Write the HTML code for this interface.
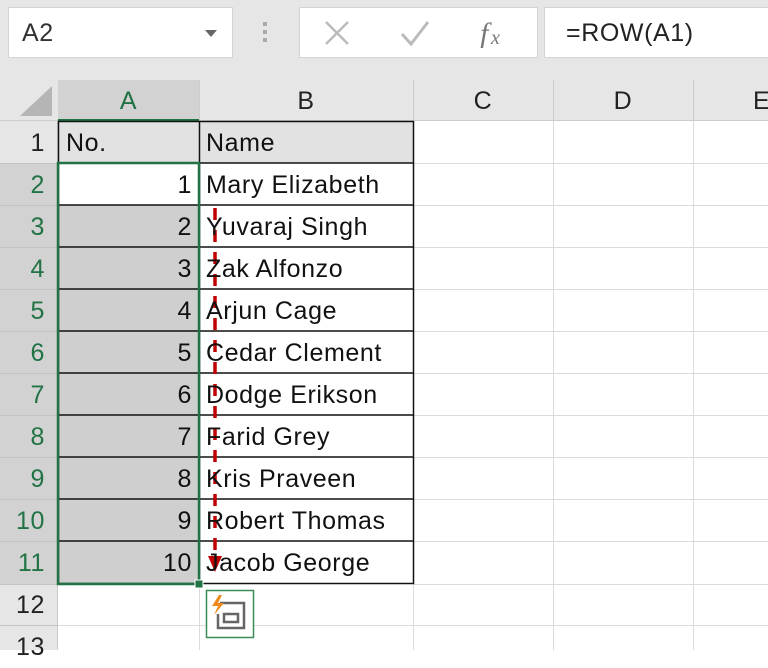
<!DOCTYPE html>
<html><head><style>
body{margin:0;width:768px;height:650px;overflow:hidden;background:#fff;font-family:"Liberation Sans",sans-serif;position:relative}
.a{position:absolute;box-sizing:border-box}
.t{font-size:25px;letter-spacing:0.6px;line-height:42px;white-space:nowrap}
</style></head><body>
<div class="a" style="left:0;top:0;width:768px;height:121px;background:#e6e6e6"></div>
<div class="a" style="left:8px;top:7px;width:225px;height:51px;background:#fff;border:1px solid #d4d4d4"></div>
<div class="a t" style="left:22px;top:12px;color:#333">A2</div>
<div class="a" style="left:205px;top:30px;width:0;height:0;border-left:6px solid transparent;border-right:6px solid transparent;border-top:7px solid #666"></div>
<div class="a" style="left:263px;top:22px;width:4px;height:4px;background:#aaa;box-shadow:0 8px 0 #aaa,0 16px 0 #aaa"></div>
<div class="a" style="left:299px;top:7px;width:239px;height:51px;background:#fff;border:1px solid #d4d4d4"></div>
<svg class="a" style="left:320px;top:18px" width="200" height="30"><path d="M6 4 L28 26 M28 4 L6 26" stroke="#bbb" stroke-width="2.5" fill="none"/><path d="M82 16 L91 26 L108 4" stroke="#bbb" stroke-width="3" fill="none"/><text x="160" y="25" font-family="Liberation Serif" font-style="italic" font-size="30" fill="#777">f</text><text x="171" y="26" font-family="Liberation Serif" font-style="italic" font-size="20" fill="#777">x</text></svg>
<div class="a" style="left:544px;top:7px;width:230px;height:51px;background:#fff;border:1px solid #d4d4d4"></div>
<div class="a t" style="left:566px;top:12px;color:#222">=ROW(A1)</div>
<div class="a" style="left:0;top:80px;width:768px;height:41px;background:#e6e6e6;border-bottom:1px solid #ccc"></div>
<div class="a" style="left:58px;top:80px;width:141px;height:41px;background:#d2d2d2;border-bottom:2px solid #217346"></div>
<svg class="a" style="left:18px;top:84px" width="36" height="34"><path d="M34 2 L34 32 L2 32Z" fill="#b5b5b5"/></svg>
<div class="a" style="left:199px;top:80px;width:1px;height:41px;background:#ccc"></div>
<div class="a" style="left:413px;top:80px;width:1px;height:41px;background:#ccc"></div>
<div class="a" style="left:553px;top:80px;width:1px;height:41px;background:#ccc"></div>
<div class="a" style="left:693px;top:80px;width:1px;height:41px;background:#ccc"></div>
<div class="a t" style="left:58px;top:80px;width:141px;text-align:center;color:#217346">A</div>
<div class="a t" style="left:199px;top:80px;width:214px;text-align:center;color:#222">B</div>
<div class="a t" style="left:413px;top:80px;width:140px;text-align:center;color:#222">C</div>
<div class="a t" style="left:553px;top:80px;width:140px;text-align:center;color:#222">D</div>
<div class="a t" style="left:753px;top:80px;color:#222">E</div>
<div class="a" style="left:0;top:121px;width:58px;height:529px;background:#e6e6e6;border-right:1px solid #ccc"></div>
<div class="a" style="left:0;top:163px;width:58px;height:421px;background:#d2d2d2"></div>
<svg class="a" style="left:0;top:0" width="768" height="650">
<g stroke="#dadada" stroke-width="1">
<line x1="413.5" y1="121" x2="413.5" y2="650"/><line x1="553.5" y1="121" x2="553.5" y2="650"/><line x1="693.5" y1="121" x2="693.5" y2="650"/>
<line x1="199.5" y1="584" x2="199.5" y2="650"/>
<line x1="58" y1="625.5" x2="768" y2="625.5"/><line x1="413" y1="584.5" x2="768" y2="584.5"/>
<line x1="413" y1="163.5" x2="768" y2="163.5"/><line x1="413" y1="205.5" x2="768" y2="205.5"/><line x1="413" y1="247.5" x2="768" y2="247.5"/><line x1="413" y1="289.5" x2="768" y2="289.5"/><line x1="413" y1="331.5" x2="768" y2="331.5"/><line x1="413" y1="373.5" x2="768" y2="373.5"/><line x1="413" y1="415.5" x2="768" y2="415.5"/><line x1="413" y1="457.5" x2="768" y2="457.5"/><line x1="413" y1="499.5" x2="768" y2="499.5"/><line x1="413" y1="541.5" x2="768" y2="541.5"/>
</g>
<g stroke="#c4c4c4"><line x1="0" y1="163.5" x2="58" y2="163.5"/><line x1="0" y1="205.5" x2="58" y2="205.5"/><line x1="0" y1="247.5" x2="58" y2="247.5"/><line x1="0" y1="289.5" x2="58" y2="289.5"/><line x1="0" y1="331.5" x2="58" y2="331.5"/><line x1="0" y1="373.5" x2="58" y2="373.5"/><line x1="0" y1="415.5" x2="58" y2="415.5"/><line x1="0" y1="457.5" x2="58" y2="457.5"/><line x1="0" y1="499.5" x2="58" y2="499.5"/><line x1="0" y1="541.5" x2="58" y2="541.5"/><line x1="0" y1="584.5" x2="58" y2="584.5"/><line x1="0" y1="625.5" x2="58" y2="625.5"/></g>
<rect x="58" y="121" width="355" height="42" fill="#e2e2e2"/>
<rect x="58" y="205" width="141" height="379" fill="#cfcfcf"/>
<g stroke="#111" stroke-width="1.5" fill="none">
<rect x="58.5" y="121.5" width="355" height="462"/>
<line x1="199.5" y1="121" x2="199.5" y2="584"/>
<line x1="58" y1="163" x2="413" y2="163"/><line x1="58" y1="205" x2="413" y2="205"/><line x1="58" y1="247" x2="413" y2="247"/><line x1="58" y1="289" x2="413" y2="289"/><line x1="58" y1="331" x2="413" y2="331"/><line x1="58" y1="373" x2="413" y2="373"/><line x1="58" y1="415" x2="413" y2="415"/><line x1="58" y1="457" x2="413" y2="457"/><line x1="58" y1="499" x2="413" y2="499"/><line x1="58" y1="541" x2="413" y2="541"/>
</g>
<rect x="58" y="163" width="141" height="421" fill="none" stroke="#217346" stroke-width="2.5"/>
<rect x="195" y="580" width="8" height="8" fill="#217346" stroke="#fff" stroke-width="1"/>
<line x1="215" y1="208" x2="215" y2="558" stroke="#c00000" stroke-width="3.5" stroke-dasharray="12 10"/>
<path d="M208 556 L222 556 L215 572Z" fill="#c00000"/>
<rect x="206.5" y="590.5" width="47" height="47" fill="#fff" stroke="#3c8a5a" stroke-width="1.5"/>
<path d="M220 603 H244 V628 H218 V614" stroke="#666" stroke-width="2.5" fill="none"/>
<rect x="224" y="614" width="14" height="8" fill="#fff" stroke="#666" stroke-width="2.5"/>
<path d="M219 595 L212 606 L218 606 L214 615 L224 603 L218 603 L222 595Z" fill="#f08a1c"/>
</svg>
<div class="a t" style="left:0;top:122px;width:45px;text-align:right;color:#222">1</div>
<div class="a t" style="left:0;top:164px;width:45px;text-align:right;color:#217346;line-height:42px">2<br>3<br>4<br>5<br>6<br>7<br>8<br>9<br>10<br>11</div>
<div class="a t" style="left:0;top:584px;width:45px;text-align:right;color:#222">12<br>13</div>
<div class="a t" style="left:66px;top:122px;color:#111">No.</div>
<div class="a t" style="left:60px;top:164px;width:132px;text-align:right;color:#111">1<br>2<br>3<br>4<br>5<br>6<br>7<br>8<br>9<br>10</div>
<div class="a t" style="left:206px;top:122px;color:#111">Name<br>Mary Elizabeth<br>Yuvaraj Singh<br>Zak Alfonzo<br>Arjun Cage<br>Cedar Clement<br>Dodge Erikson<br>Farid Grey<br>Kris Praveen<br>Robert Thomas<br>Jacob George</div>
</body></html>
